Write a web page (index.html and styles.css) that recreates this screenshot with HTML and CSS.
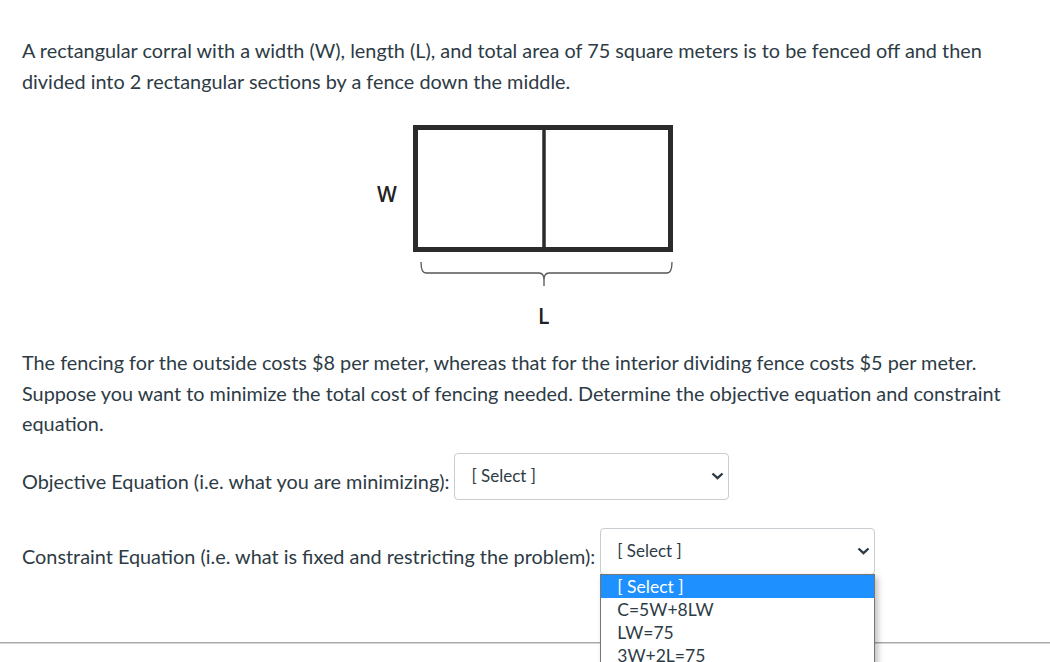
FILE: index.html
```html
<!DOCTYPE html>
<html>
<head>
<meta charset="utf-8">
<link rel="stylesheet" href="styles.css">
</head>
<body>
<div class="content">
  <p class="para">A rectangular corral with a width (W), length (L), and total area of 75 square meters is to be fenced off and then divided into 2 rectangular sections by a fence down the middle.</p>
  <svg class="figure" width="340" height="225" viewBox="0 0 340 225">
    <rect x="55.5" y="17.5" width="255" height="122" fill="none" stroke="#2b2b2b" stroke-width="5"/>
    <line x1="184" y1="17" x2="184" y2="140" stroke="#2b2b2b" stroke-width="3.5"/>
    <text x="17" y="92" class="fig-label">W</text>
    <path d="M61 152 Q61 163 66 163 L179 163 Q184 163 184 170 L184 176 M184 170 Q184 163 189 163 L307 163 Q312 163 312 152" fill="none" stroke="#555" stroke-width="1.3"/>
    <text x="178" y="214" class="fig-label">L</text>
  </svg>
  <p class="para second">The fencing for the outside costs $8 per meter, whereas that for the interior dividing fence costs $5 per meter. Suppose you want to minimize the total cost of fencing needed. Determine the objective equation and constraint equation.</p>
  <div class="row first-row">
    <span class="label">Objective Equation (i.e. what you are minimizing):</span>
    <div class="select">
      <span>[ Select ]</span>
      <svg class="chev" width="13" height="8" viewBox="0 0 13 8"><path d="M1.5 1.5 L6.5 6.2 L11.5 1.5" fill="none" stroke="#2d3b45" stroke-width="2.4"/></svg>
    </div>
  </div>
  <div class="row second-row">
    <span class="label">Constraint Equation (i.e. what is fixed and restricting the problem):</span>
    <div class="select">
      <span>[ Select ]</span>
      <svg class="chev" width="13" height="8" viewBox="0 0 13 8"><path d="M1.5 1.5 L6.5 6.2 L11.5 1.5" fill="none" stroke="#2d3b45" stroke-width="2.4"/></svg>
      <ul class="options">
        <li class="active">[ Select ]</li>
        <li>C=5W+8LW</li>
        <li>LW=75</li>
        <li>3W+2L=75</li>
      </ul>
    </div>
  </div>
</div>
<hr class="rule">
</body>
</html>
```

FILE: styles.css
```css
html {
  overflow: hidden;
}
body {
  margin: 0;
  padding: 0;
  min-height: 662px;
  background: #ffffff;
  font-family: Lato, "Open Sans", sans-serif;
  color: #2d3b45;
  font-size: 19.85px;
  line-height: 30.5px;
}
.content {
  padding: 35px 22px 0 22px;
}
.para {
  margin: 0;
}
.figure {
  display: block;
  margin: 14px 0 0 338px;
}
.fig-label {
  font-family: "Open Sans", "DejaVu Sans", sans-serif;
  font-size: 21px;
  font-weight: 600;
  fill: #222;
}
.second {
  margin-top: 12px;
}
.row {
  display: flex;
  align-items: flex-start;
}
.first-row {
  margin-top: 14px;
}
.second-row {
  margin-top: 28px;
}
.label {
  margin-top: 13px;
  margin-right: 5px;
}
.select {
  position: relative;
  box-sizing: border-box;
  width: 275px;
  height: 47px;
  border: 1px solid #c7cdd1;
  border-radius: 4px;
  padding: 0 4px 0 16px;
  display: flex;
  align-items: center;
  justify-content: space-between;
  font-size: 17px;
  line-height: 20px;
  background: #fff;
}
.select > span {
  margin-top: -1px;
}
.options {
  position: absolute;
  left: -1px;
  top: 45px;
  width: 275px;
  box-sizing: border-box;
  margin: 0;
  padding: 0;
  list-style: none;
  background: #fff;
  border: 1px solid #767676;
  box-shadow: 3px 3px 6px rgba(0, 0, 0, 0.25);
  font-size: 17.5px;
  z-index: 2;
}
.options li {
  height: 23px;
  line-height: 23px;
  padding-left: 16px;
  color: #2d3b45;
}
.options li.active {
  background: #1e90ff;
  color: #ffffff;
}
.rule {
  margin: 67px 0 0 0;
  border: 0;
  border-top: 1px solid #a8a8a8;
  border-bottom: 1px solid #d6d6d6;
  height: 0;
}
```
